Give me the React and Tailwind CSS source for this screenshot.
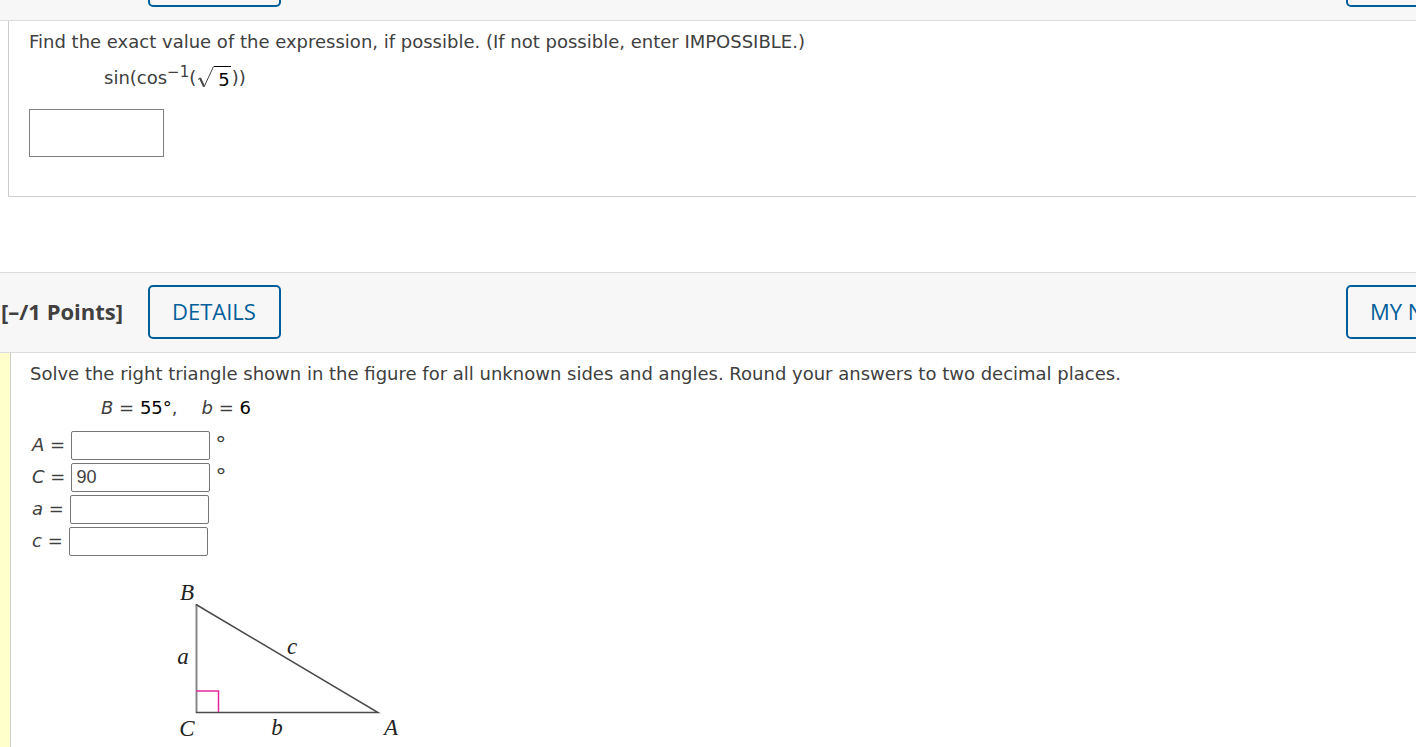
const answers = [
  { id: 'angle-A', label: 'A', value: '', unit: '°' },
  { id: 'angle-C', label: 'C', value: '90', unit: '°' },
  { id: 'side-a', label: 'a', value: '' },
  { id: 'side-c', label: 'c', value: '' },
]

function HeaderButton({ children, className = '' }) {
  return (
    <button
      type="button"
      className={`h-[54px] shrink-0 rounded-[5px] border-2 border-[#005f9a] px-[22px] pb-0.5 text-left text-[22px] font-medium whitespace-nowrap text-[#005f9a] ${className}`}
    >
      {children}
    </button>
  )
}

function QuestionHeader({ className = '' }) {
  return (
    <header
      className={`flex h-[81px] shrink-0 items-start border-y border-[#dcdcdc] bg-[#f7f7f7] pt-3 font-['Open_Sans',sans-serif] ${className}`}
    >
      <h2 className="w-[148px] shrink-0 pl-px text-[22px] leading-[52px] font-bold text-[#404040]">
        [–/1 Points]
      </h2>
      <HeaderButton className="w-[133px]">DETAILS</HeaderButton>
      {/* Runs past the right edge of the window */}
      <HeaderButton className="-mr-20 ml-auto w-[150px]">MY NOTES</HeaderButton>
    </header>
  )
}

function SquareRoot({ children }) {
  return (
    <span className="inline-flex items-start pt-px">
      <svg width="18" height="24" viewBox="0 0 18 24" fill="none" stroke="#444" aria-hidden="true">
        <path d="M2 13.5 L4 12" strokeWidth="1" />
        <path d="M4 12 L8 20.5" strokeWidth="2" />
        <path d="M8 21 L17.5 0.5" strokeWidth="1" />
      </svg>
      <span className="border-t border-black pt-px pr-px pl-1 text-black">{children}</span>
    </span>
  )
}

function TriangleFigure() {
  return (
    <svg
      width="240"
      height="168"
      viewBox="0 0 240 168"
      role="img"
      aria-label="Right triangle ABC with the right angle at C"
      className="ml-[129px] block"
    >
      <path d="M36.5 24 V133" stroke="#888" strokeWidth="2" />
      <path d="M36 24.5 L218 132.5 H36" fill="none" stroke="#4a4a4a" strokeWidth="1.5" />
      <path d="M36 111 H58.5 V132" fill="none" stroke="#e5279a" strokeWidth="1.5" />
      <g
        fill="#222"
        fontSize="23"
        fontStyle="italic"
        textAnchor="middle"
        fontFamily="'Liberation Serif', serif"
      >
        <text x="27" y="20">B</text>
        <text x="23" y="84">a</text>
        <text x="132" y="74">c</text>
        <text x="27" y="156">C</text>
        <text x="117" y="155">b</text>
        <text x="231" y="155">A</text>
      </g>
    </svg>
  )
}

export default function App() {
  return (
    <main className="flex min-h-screen flex-col overflow-hidden bg-white font-['DejaVu_Sans',sans-serif] text-[18px] leading-6 text-[#404040]">
      <QuestionHeader className="-mt-15" />

      <section className="mb-[75px] ml-2 border-b border-l border-[#ccc] pt-[9px] pb-[39px] pl-5">
        <p>Find the exact value of the expression, if possible. (If not possible, enter IMPOSSIBLE.)</p>
        <div className="mt-3 flex h-6 items-center pl-[75px]">
          <span>sin(cos</span>
          <sup className="top-0 self-start text-[15px] leading-3">−1</sup>
          <span>(</span>
          <SquareRoot>5</SquareRoot>
          <span className="ml-px">))</span>
        </div>
        <input
          type="text"
          aria-label="Value of the expression"
          className="mt-[19px] block h-12 w-[135px] border border-[#808080] px-2"
        />
      </section>

      <QuestionHeader />

      <div className="flex grow">
        <div className="w-[10px] shrink-0 bg-[#ffffcc]" />
        <section className="grow border-l border-[#ccc] pt-[9px] pl-[19px]">
          <p>
            Solve the right triangle shown in the figure for all unknown sides and angles. Round your
            answers to two decimal places.
          </p>
          <p className="mt-[10px] pl-[71px]">
            <i>B</i> = <span className="text-black">55°</span>,
            <span className="ml-6">
              <i>b</i> = <span className="text-black">6</span>
            </span>
          </p>

          <div className="mt-[9px] ml-0.5">
            {answers.map(({ id, label, value, unit }) => (
              <div key={id} className="flex h-8 items-center">
                <label htmlFor={id} className="mr-[6px]">
                  <i>{label}</i> =
                </label>
                <input
                  id={id}
                  type="text"
                  defaultValue={value}
                  className="h-[29px] w-[139px] rounded-[2px] border border-[#767676] px-1 font-['Liberation_Sans',sans-serif] text-[18px]"
                />
                {unit && <span className="ml-[5px] text-[22px]">{unit}</span>}
              </div>
            ))}
          </div>

          <div className="mt-[23px] ml-px">
            <TriangleFigure />
          </div>
        </section>
      </div>
    </main>
  )
}
